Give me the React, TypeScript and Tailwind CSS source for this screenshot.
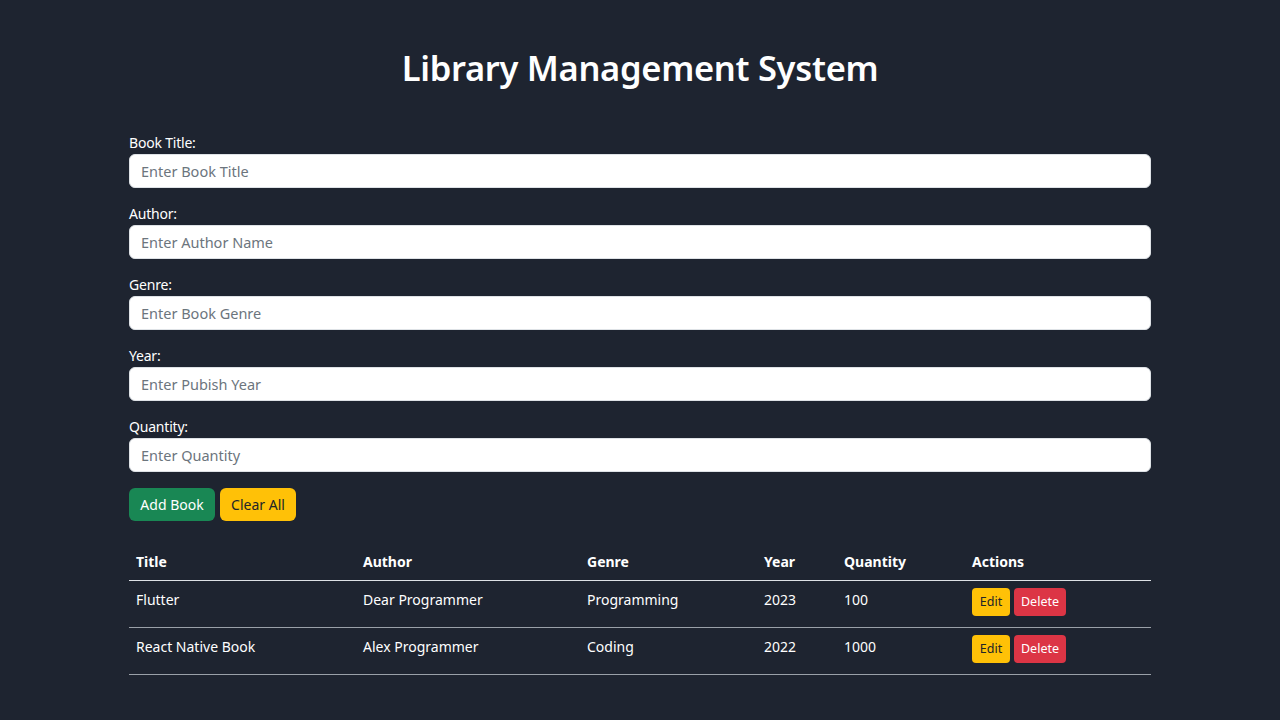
import React from "react";

const fields = [
  { label: "Book Title:", ph: "Enter Book Title" },
  { label: "Author:", ph: "Enter Author Name" },
  { label: "Genre:", ph: "Enter Book Genre" },
  { label: "Year:", ph: "Enter Pubish Year" },
  { label: "Quantity:", ph: "Enter Quantity" },
];

const rows = [
  { t: "Flutter", a: "Dear Programmer", g: "Programming", y: "2023", q: "100" },
  { t: "React Native Book", a: "Alex Programmer", g: "Coding", y: "2022", q: "1000" },
];

export default function App() {
  return (
    <div
      className="min-h-[720px] w-full bg-[#1e2430] text-white"
      style={{ fontFamily: '"Noto Sans", "Open Sans", sans-serif' }}
    >
      <div className="mx-auto w-[1022px] pt-[46px]">
        <h1 className="text-center text-[34.5px] leading-[44px] font-semibold tracking-[-0.3px]">
          Library Management System
        </h1>
        <div className="mt-[45px] flex flex-col gap-[18px]">
          {fields.map((f) => (
            <div key={f.label} className="flex flex-col">
              <label className="text-[14px] leading-[16px] mb-[3px] tracking-[-0.2px]">{f.label}</label>
              <input
                className="h-[34px] w-full rounded-[6px] border border-[#dee2e6] bg-white px-[11px] text-[14.5px] text-[#212529] placeholder:text-[#6c757d] outline-none"
                placeholder={f.ph}
              />
            </div>
          ))}
        </div>
        <div className="mt-[16px] flex gap-[5px]">
          <button className="h-[33px] w-[86px] rounded-[6px] bg-[#198754] text-[14px] text-white">
            Add Book
          </button>
          <button className="h-[33px] w-[76px] rounded-[6px] bg-[#ffc107] text-[14px] text-[#212529]">
            Clear All
          </button>
        </div>
        <table className="mt-[24px] w-full table-fixed border-collapse text-left text-[14px]">
          <colgroup>
            <col className="w-[227px]" />
            <col className="w-[224px]" />
            <col className="w-[177px]" />
            <col className="w-[80px]" />
            <col className="w-[128px]" />
            <col />
          </colgroup>
          <thead>
            <tr className="border-b border-[#dee2e6]">
              {["Title", "Author", "Genre", "Year", "Quantity", "Actions"].map((h) => (
                <th key={h} className="pl-[7px] pt-[6px] pb-[8px] font-bold">
                  {h}
                </th>
              ))}
            </tr>
          </thead>
          <tbody>
            {rows.map((r) => (
              <tr key={r.t} className="h-[47px] border-b border-[#9aa0a8] align-top">
                <td className="pl-[7px] pt-[8px]">{r.t}</td>
                <td className="pl-[7px] pt-[8px]">{r.a}</td>
                <td className="pl-[7px] pt-[8px]">{r.g}</td>
                <td className="pl-[7px] pt-[8px]">{r.y}</td>
                <td className="pl-[7px] pt-[8px]">{r.q}</td>
                <td className="pl-[7px] pt-[7px]">
                  <div className="flex gap-[4px]">
                    <button className="h-[28px] w-[38px] rounded-[4px] bg-[#ffc107] text-[12.5px] text-[#212529]">
                      Edit
                    </button>
                    <button className="h-[28px] w-[52px] rounded-[4px] bg-[#dc3545] text-[12.5px] text-white">
                      Delete
                    </button>
                  </div>
                </td>
              </tr>
            ))}
          </tbody>
        </table>
      </div>
    </div>
  );
}
